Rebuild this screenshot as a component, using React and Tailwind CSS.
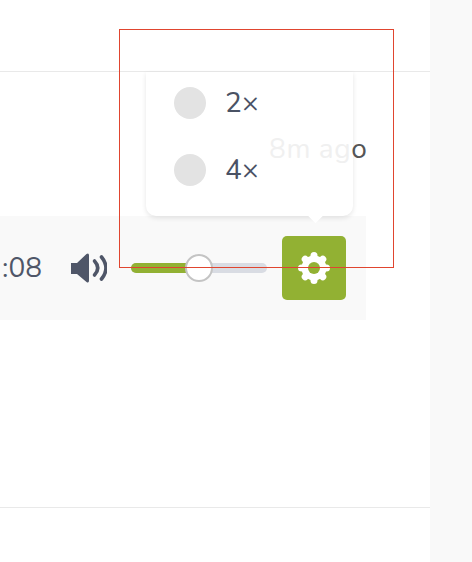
import React from 'react';

function VolumeIcon() {
  return (
    <svg width="36" height="30" viewBox="0 0 36 30" fill="#4f5668" className="ml-[29px] shrink-0">
      <path d="M0 10 H6 L15.5 1 Q18 -0.5 18 2.5 V27.5 Q18 30.5 15.5 29 L6 21 H0 Z" />
      <path d="M23.5 8 Q30 15 23.5 22" fill="none" stroke="#4f5668" strokeWidth="3.6" strokeLinecap="round" />
      <path d="M30.5 4 Q39.5 15 30.5 26" fill="none" stroke="#4f5668" strokeWidth="3.6" strokeLinecap="round" />
    </svg>
  );
}

function GearIcon() {
  return (
    <svg width="34" height="34" viewBox="0 0 34 34" fill="none">
      <circle cx="17" cy="17" r="12.5" fill="#fff" />
      <g stroke="#fff" strokeWidth="7" strokeLinecap="round">
        <path d="M17 4.5 V29.5" />
        <path d="M4.5 17 H29.5" />
        <path d="M8.2 8.2 L25.8 25.8" />
        <path d="M25.8 8.2 L8.2 25.8" />
      </g>
      <circle cx="17" cy="17" r="6" fill="#92b133" />
    </svg>
  );
}

function SpeedOption({ label }) {
  return (
    <div className="flex items-center gap-[19px] h-[32px]">
      <span className="w-[32px] h-[32px] rounded-full bg-[#e3e3e3]" />
      <span className="text-[28px] leading-none tracking-[0.3px] text-[#4a5264]">{label}</span>
    </div>
  );
}

export default function App() {
  return (
    <div className="relative w-[472px] h-[562px] overflow-hidden bg-white font-['Nunito','Lato',sans-serif]">
      <div className="flex h-full">
        <div className="w-[430px] shrink-0">
          <div className="h-[72px] border-b border-[#e9e9e9]" />
          <div className="h-[144px]" />
          <div className="flex items-center w-[366px] h-[104px] bg-[#f9f9f9]">
            <span className="text-[28px] text-[#4f5668] w-[42px] text-right shrink-0 leading-none">:08</span>
            <VolumeIcon />
            <div className="relative ml-[24px] w-[136px] h-[10px] rounded-full bg-[#d9dce3] shrink-0">
              <div className="h-full w-[68px] rounded-full bg-[#92b133]" />
              <div className="absolute left-[54px] top-[-9px] w-[28px] h-[28px] rounded-full bg-white border-2 border-[#c4c4c4]" />
            </div>
            <button className="ml-[15px] w-[64px] h-[64px] rounded-[5px] bg-[#92b133] flex items-center justify-center shrink-0">
              <GearIcon />
            </button>
          </div>
          <div className="h-[188px] border-b border-[#e9e9e9]" />
        </div>
        <div className="flex-1 bg-[#f9f9f9]" />
      </div>

      <div className="absolute left-[146px] top-[72px] w-[207px] h-[144px] bg-white rounded-b-[10px] shadow-[0_2px_5px_rgba(0,0,0,0.1)] pl-[28px] pt-[15px] flex flex-col gap-[35px]">
        <SpeedOption label="2×" />
        <SpeedOption label="4×" />
        <div className="absolute left-[164px] bottom-[-5px] w-[11px] h-[11px] rotate-45 bg-white" />
      </div>

      <span className="absolute left-[269px] top-[132px] text-[28px] leading-[34px] tracking-[0.6px] text-[#555555]">
        <span className="text-[#f0f0f0]">8m ag</span>o
      </span>

      <div className="absolute left-[119px] top-[29px] w-[275px] h-[239px] border border-[#e0452f]" />
    </div>
  );
}
